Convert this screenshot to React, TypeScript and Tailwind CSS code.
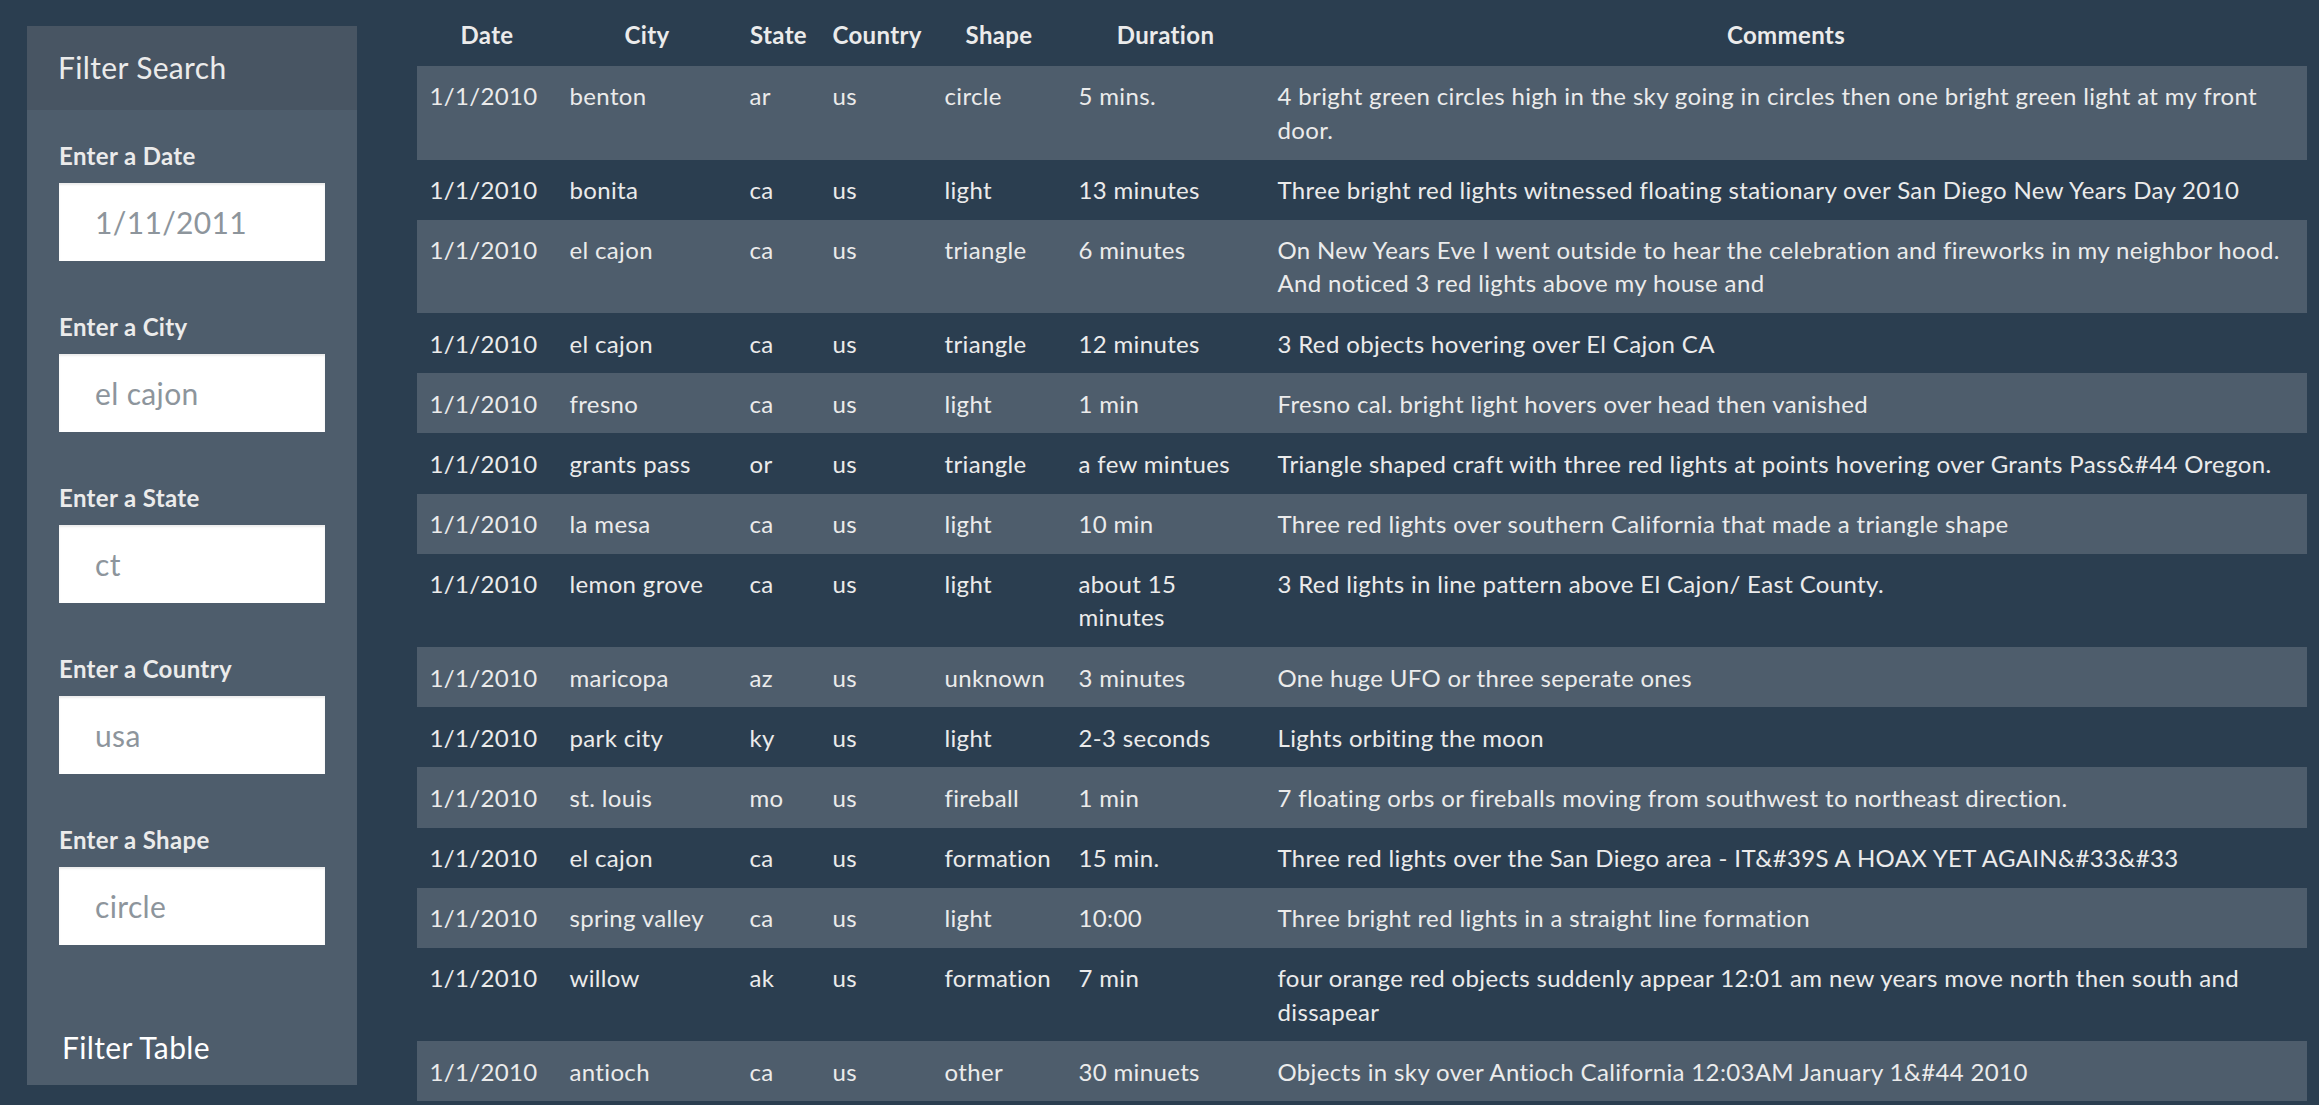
import React from 'react';

const rows = [
  ['1/1/2010', 'benton', 'ar', 'us', 'circle', '5 mins.', '4 bright green circles high in the sky going in circles then one bright green light at my front door.'],
  ['1/1/2010', 'bonita', 'ca', 'us', 'light', '13 minutes', 'Three bright red lights witnessed floating stationary over San Diego New Years Day 2010'],
  ['1/1/2010', 'el cajon', 'ca', 'us', 'triangle', '6 minutes', 'On New Years Eve I went outside to hear the celebration and fireworks in my neighbor hood. And noticed 3 red lights above my house and'],
  ['1/1/2010', 'el cajon', 'ca', 'us', 'triangle', '12 minutes', '3 Red objects hovering over El Cajon CA'],
  ['1/1/2010', 'fresno', 'ca', 'us', 'light', '1 min', 'Fresno cal. bright light hovers over head then vanished'],
  ['1/1/2010', 'grants pass', 'or', 'us', 'triangle', 'a few mintues', 'Triangle shaped craft with three red lights at points hovering over Grants Pass&#44 Oregon.'],
  ['1/1/2010', 'la mesa', 'ca', 'us', 'light', '10 min', 'Three red lights over southern California that made a triangle shape'],
  ['1/1/2010', 'lemon grove', 'ca', 'us', 'light', 'about 15 minutes', '3 Red lights in line pattern above El Cajon/ East County.'],
  ['1/1/2010', 'maricopa', 'az', 'us', 'unknown', '3 minutes', 'One huge UFO or three seperate ones'],
  ['1/1/2010', 'park city', 'ky', 'us', 'light', '2-3 seconds', 'Lights orbiting the moon'],
  ['1/1/2010', 'st. louis', 'mo', 'us', 'fireball', '1 min', '7 floating orbs or fireballs moving from southwest to northeast direction.'],
  ['1/1/2010', 'el cajon', 'ca', 'us', 'formation', '15 min.', 'Three red lights over the San Diego area - IT&#39S A HOAX YET AGAIN&#33&#33'],
  ['1/1/2010', 'spring valley', 'ca', 'us', 'light', '10:00', 'Three bright red lights in a straight line formation'],
  ['1/1/2010', 'willow', 'ak', 'us', 'formation', '7 min', 'four orange red objects suddenly appear 12:01 am new years move north then south and dissapear'],
  ['1/1/2010', 'antioch', 'ca', 'us', 'other', '30 minuets', 'Objects in sky over Antioch California 12:03AM January 1&#44 2010'],
];

const filters = [
  { label: 'Enter a Date', placeholder: '1/11/2011' },
  { label: 'Enter a City', placeholder: 'el cajon' },
  { label: 'Enter a State', placeholder: 'ct' },
  { label: 'Enter a Country', placeholder: 'usa' },
  { label: 'Enter a Shape', placeholder: 'circle' },
];

const headers = ['Date', 'City', 'State', 'Country', 'Shape', 'Duration', 'Comments'];
const widths = ['w-[140px]', 'w-[180px]', 'w-[83px]', 'w-[112px]', 'w-[134px]', 'w-[199px]', 'w-auto'];

export default function App() {
  return (
    <div className="h-[1105px] overflow-hidden bg-[#2b3e50] text-[#ebebeb] font-['Lato',sans-serif] text-[24px] tracking-[0.35px] leading-[33.5px]">
      <div className="flex items-start pr-[12px]">
        {/* sidebar */}
        <aside className="mt-[26px] ml-[27px] w-[330px] shrink-0 bg-[#4e5d6c]">
          <div className="h-[84px] bg-[#485563] pl-[31px] flex items-center text-[30px]">Filter Search</div>
          <div className="pt-[29px] px-[32px]">
            {filters.map((f, i) => (
              <div key={f.label} className={i < filters.length - 1 ? 'mb-[49px]' : ''}>
                <label className="block font-bold leading-[34px] mb-[10px]">{f.label}</label>
                <input
                  type="text"
                  placeholder={f.placeholder}
                  className="block w-full h-[78px] bg-white pl-[36px] text-[30px] text-[#2b3e50] placeholder:text-[#8d959c] outline-none shadow-[inset_0_2px_2px_rgba(0,0,0,0.08)]"
                />
              </div>
            ))}
            <button className="block mt-[64px] h-[76px] pl-[3px] text-[30px] text-white leading-[76px]">Filter Table</button>
          </div>
        </aside>

        {/* table */}
        <main className="ml-[60px] flex-1">
          <table className="w-full table-fixed border-collapse">
            <colgroup>
              {widths.map((w, i) => (
                <col key={i} className={w} />
              ))}
            </colgroup>
            <thead>
              <tr>
                {headers.map((h) => (
                  <th key={h} className="h-[66px] px-[12.5px] pt-[4px] text-center font-bold align-middle">
                    {h}
                  </th>
                ))}
              </tr>
            </thead>
            <tbody>
              {rows.map((r, i) => (
                <tr key={i} className={i % 2 === 0 ? 'bg-[#4e5d6c]' : ''}>
                  {r.map((c, j) => (
                    <td key={j} className="px-[12.5px] py-[13.3px] align-top">
                      {c}
                    </td>
                  ))}
                </tr>
              ))}
            </tbody>
          </table>
        </main>
      </div>
    </div>
  );
}
